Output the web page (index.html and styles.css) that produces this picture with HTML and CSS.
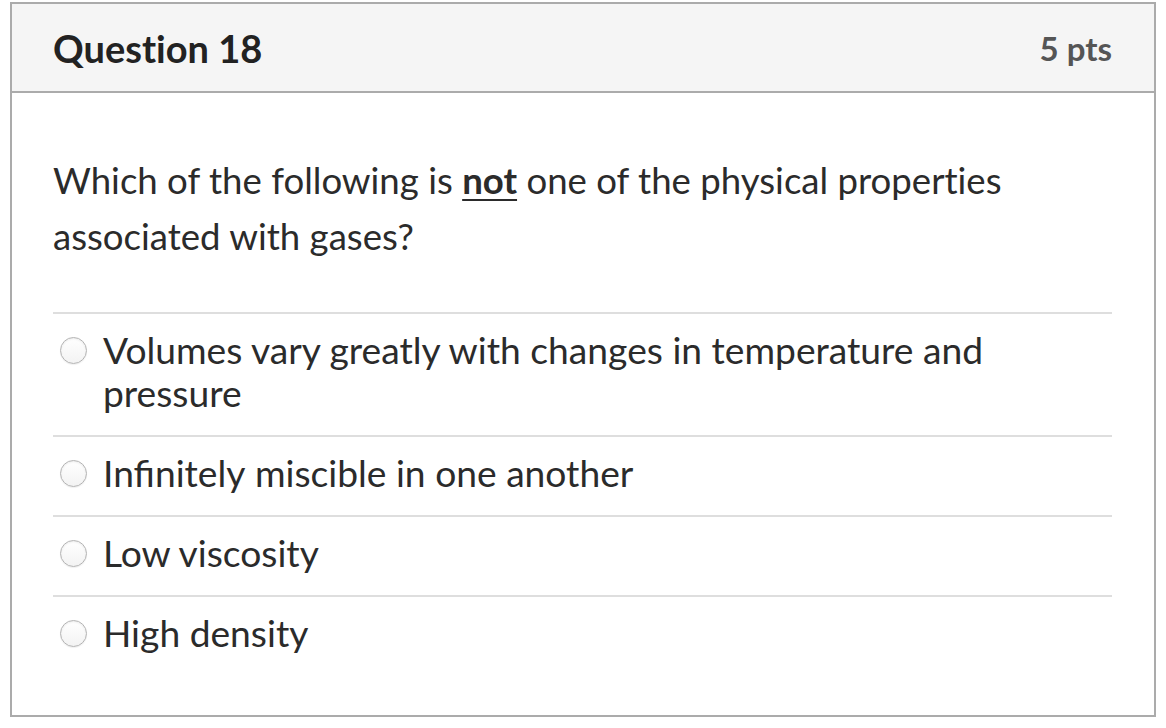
FILE: index.html
```html
<!DOCTYPE html>
<html lang="en">
<head>
<meta charset="utf-8">
<title>Question 18</title>
<link rel="stylesheet" href="styles.css">
</head>
<body>
<div class="question">
  <div class="question-header">
    <h2 class="question-title">Question 18</h2>
    <span class="question-points">5 pts</span>
  </div>
  <div class="question-body">
    <p class="question-text">Which of the following is <strong class="u">not</strong> one of the physical properties associated with gases?</p>
    <div class="answers">
      <label class="answer"><span class="radio"></span><span class="answer-label">Volumes vary greatly with changes in temperature and pressure</span></label>
      <label class="answer"><span class="radio"></span><span class="answer-label"><span class="lig">Infinitely</span> miscible in one another</span></label>
      <label class="answer"><span class="radio"></span><span class="answer-label">Low viscosity</span></label>
      <label class="answer"><span class="radio"></span><span class="answer-label">High density</span></label>
    </div>
  </div>
</div>
</body>
</html>
```
FILE: styles.css
```css
html, body {
  margin: 0;
  padding: 0;
  background: #fff;
}
body {
  font-family: Lato, "Liberation Sans", sans-serif;
  font-variant-ligatures: no-common-ligatures;
  color: #2b2b2b;
  padding: 2px 10px 0 10px;
}
.lig {
  font-variant-ligatures: common-ligatures;
}
.question {
  width: 1142px;
  height: 711px;
  border: 2px solid #ababab;
  display: flex;
  flex-direction: column;
}
.question-header {
  height: 87px;
  background: #f5f5f5;
  border-bottom: 2px solid #ababab;
  display: flex;
  align-items: center;
  justify-content: space-between;
  padding: 0 42px 0 41px;
}
.question-title {
  margin: 0;
  font-size: 38px;
  font-weight: 700;
  color: #222;
}
.question-points {
  font-size: 33px;
  font-weight: 700;
  color: #555;
}
.question-body {
  padding: 0 42px 0 41px;
}
.question-text {
  margin: 59px 0 48px 0;
  font-size: 36.6px;
  line-height: 56px;
}
.question-text .u {
  text-decoration: underline;
  text-decoration-thickness: 2px;
  text-underline-offset: 5px;
}
.answers {
  display: flex;
  flex-direction: column;
}
.answer {
  display: flex;
  align-items: flex-start;
  border-top: 2px solid #dedede;
  padding: 14px 0 21px 0;
}
.radio {
  flex: none;
  width: 25px;
  height: 25px;
  margin: 9px 16px 0 7px;
  border-radius: 50%;
  border: 1px solid #b3b3b3;
  background: linear-gradient(#ffffff, #f3f3f3);
  box-shadow: inset 0 1px 2px rgba(0,0,0,0.08), 0 1px 1px rgba(0,0,0,0.06);
}
.answer-label {
  font-size: 37.2px;
  line-height: 43px;
}
```
